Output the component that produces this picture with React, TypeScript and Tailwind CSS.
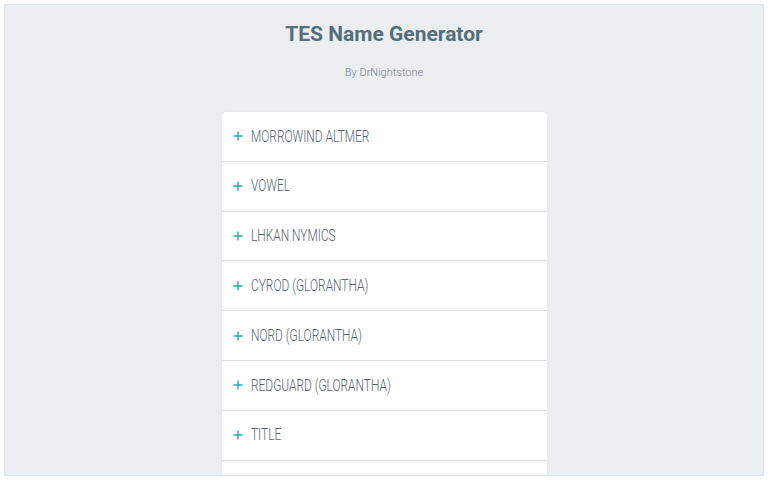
import React from "react";

const items = [
  "MORROWIND ALTMER",
  "VOWEL",
  "LHKAN NYMICS",
  "CYROD (GLORANTHA)",
  "NORD (GLORANTHA)",
  "REDGUARD (GLORANTHA)",
  "TITLE",
];

function Plus() {
  return (
    <svg width="10" height="10" viewBox="0 0 10 10" className="shrink-0">
      <path d="M5 0.5V9.5M0.5 5H9.5" stroke="#2aa6b6" strokeWidth="1.4" />
    </svg>
  );
}

export default function App() {
  return (
    <div className="w-[768px] h-[480px] bg-white p-[4px] overflow-hidden">
      <div className="w-[760px] h-[472px] bg-[#eaeef1] border border-[#dde2e6] overflow-hidden flex flex-col items-center">
        <h1
          className="mt-[14px] text-[21px] leading-[30px] font-bold text-[#546e7a]"
          style={{ fontFamily: "Roboto, sans-serif" }}
        >
          TES Name Generator
        </h1>
        <div
          className="mt-[17px] text-[11px] leading-[14px] font-light text-[#737f88]"
          style={{ fontFamily: "Roboto, sans-serif" }}
        >
          By DrNightstone
        </div>
        <div className="mt-[32px] w-[325px] bg-white rounded-t-[4px] shadow-[0_0_1px_rgba(0,0,0,0.12)] flex flex-col">
          {items.map((t) => (
            <div
              key={t}
              className="h-[49.8px] shrink-0 flex items-center gap-[8px] pl-[11px] border-b border-[#dfe2e5]"
            >
              <Plus />
              <span
                className="inline-block origin-left scale-x-[0.7] text-[17px] font-light text-[#56636c] whitespace-nowrap"
                style={{ fontFamily: "Roboto, sans-serif" }}
              >
                {t}
              </span>
            </div>
          ))}
          <div className="h-[49.8px] shrink-0" />
        </div>
      </div>
    </div>
  );
}
